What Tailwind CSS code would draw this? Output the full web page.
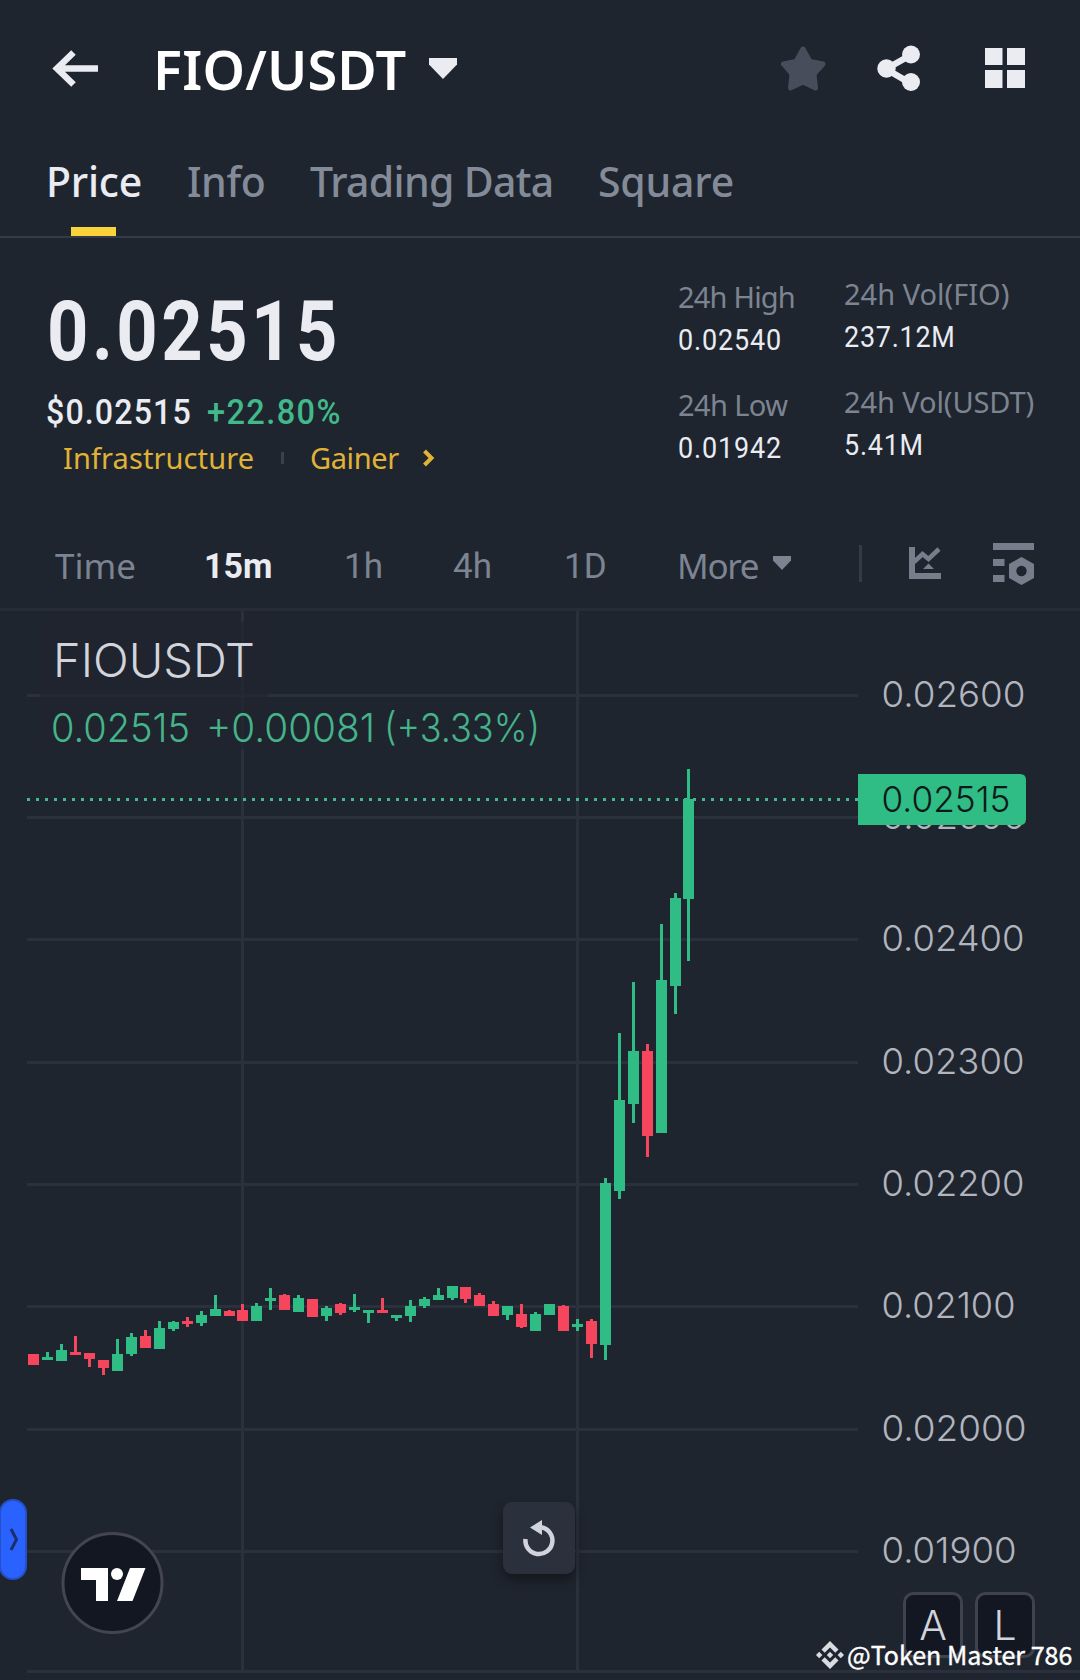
<!DOCTYPE html>
<html lang="en">
<head>
    <meta charset="UTF-8">
    <meta name="viewport" content="width=device-width, initial-scale=1.0">
    <title>FIO/USDT</title>
    <script src="https://cdn.jsdelivr.net/npm/@tailwindcss/browser@4"></script>
</head>
<body class="bg-[#1f252f] font-['Noto_Sans',sans-serif] text-[#eaecf2]">
    <div class="w-[1080px] h-[1680px] overflow-hidden flex flex-col">
        <!-- Header -->
        <header class="h-[137px] shrink-0 flex items-center pl-[52px] pr-[55px]">
            <svg class="w-[48px] h-[38px] shrink-0" viewBox="0 0 48 38" fill="none" stroke="#eaecf2" stroke-width="6.5"><path d="M5 18.500H46M21.500 2.500L5 18.500L21.500 34.500"/></svg>
            <h1 class="ml-[53px] w-[263px] whitespace-nowrap text-[54px] leading-[60px] font-semibold text-white tracking-[0.2px]">FIO/USDT</h1>
            <svg class="ml-[13px] w-[28px] h-[22px]" viewBox="0 0 28 22" fill="#eaecf2"><path d="M0 0H28V6.500L14 21L0 6.500Z"/></svg>
            <div class="ml-auto flex items-center">
                <svg class="w-[46px] h-[48px]" viewBox="0 0 46 48" fill="#474d5b" stroke="#474d5b" stroke-width="5" stroke-linejoin="round"><path d="M22 4L29 16.500L42 19L33 29L34.500 43L22 37L9.500 43L11 29L2.500 19L15 16.500Z"/></svg>
                <svg class="ml-[49px] w-[44px] h-[48px]" viewBox="0 0 44 48" fill="#eaecf2" stroke="#eaecf2"><path d="M34 10.500L10 24L34 38" fill="none" stroke-width="6.500"/><circle cx="35" cy="9.500" r="9" stroke="none"/><circle cx="10.500" cy="23.500" r="9.200" stroke="none"/><circle cx="35" cy="37" r="9" stroke="none"/></svg>
                <svg class="ml-[65px] w-[40px] h-[42px]" viewBox="0 0 40 42" fill="#eaecf2"><path d="M0 0H17.500V17H0ZM22 0H40V17H22ZM0 22H17.500V40H0ZM22 22H40V40H22Z"/></svg>
            </div>
        </header>

        <!-- Tabs -->
        <nav class="h-[101px] shrink-0 border-b-2 border-[#333b47] pl-[46px] pt-[19px] flex text-[41px] leading-[50px] font-medium text-[#848b98] whitespace-nowrap">
            <div class="relative w-[141px] text-[#eaecf2] tracking-[-0.2px]">Price<span class="absolute left-[25px] bottom-0 w-[45px] h-[9px] bg-[#f8d33a]"></span></div>
            <div class="w-[123px] tracking-[-0.4px]">Info</div>
            <div class="w-[288px] tracking-[-0.7px]">Trading Data</div>
            <div class="tracking-[-0.2px]">Square</div>
        </nav>

        <!-- Price summary -->
        <section class="h-[286px] shrink-0 flex whitespace-nowrap">
            <div class="w-[678px] pl-[47px] pt-[52px]">
                <div class="font-[Roboto] text-[83px] leading-[84px] font-bold origin-left scale-x-[0.87] tracking-[4px]">0.02515</div>
                <div class="mt-[15px] -ml-px flex font-[Roboto] text-[35px] leading-[48px] font-medium">
                    <span class="w-[161px] origin-left scale-x-[0.92] tracking-[1.2px]">$0.02515</span>
                    <span class="text-[#41b98a] origin-left scale-x-[0.93] tracking-[1.5px]">+22.80%</span>
                </div>
                <div class="mt-[3px] pl-[16px] flex items-center text-[29px] leading-[36px] text-[#e0b236]">
                    <span class="w-[218px] tracking-[0.1px]">Infrastructure</span>
                    <span class="w-[3px] h-3 bg-[#3a414e]"></span>
                    <span class="ml-[26px] w-[112px] tracking-[-0.4px]">Gainer</span>
                    <svg class="w-[14px] h-[18px]" viewBox="0 0 14 18" fill="none" stroke="#e0b236" stroke-width="4"><path d="M2.500 2L9.500 9L2.500 16"/></svg>
                </div>
            </div>
            <div class="w-[166px] pt-[38px] text-[29px] leading-[42px]">
                <div class="text-[#7d8491] tracking-[-0.8px]">24h High</div>
                <div class="pt-px font-[Roboto] origin-left scale-x-[0.93] tracking-[0.9px]">0.02540</div>
                <div class="mt-[23px] text-[#7d8491] tracking-[-0.6px]">24h Low</div>
                <div class="pt-px font-[Roboto] origin-left scale-x-[0.93] tracking-[0.9px]">0.01942</div>
            </div>
            <div class="pt-[35px] text-[29px] leading-[42px]">
                <div class="text-[#7d8491]">24h Vol(FIO)</div>
                <div class="pt-px font-[Roboto] origin-left scale-x-[0.93] tracking-[0.8px]">237.12M</div>
                <div class="mt-[23px] text-[#7d8491] tracking-[-0.1px]">24h Vol(USDT)</div>
                <div class="pt-px font-[Roboto] origin-left scale-x-[0.93] tracking-[0.8px]">5.41M</div>
            </div>
        </section>

        <!-- Intervals -->
        <div class="h-[84px] shrink-0 pl-[55px] flex items-center text-[35px] leading-[42px] text-[#7d8491] whitespace-nowrap">
            <span class="w-[149px]">Time</span>
            <span class="w-[140px] pt-px font-[Roboto] font-bold text-[#eaecf2] origin-left scale-x-[0.97]">15m</span>
            <span class="w-[109px] pt-0.5 font-[Roboto]">1h</span>
            <span class="w-[111px] pt-0.5 font-[Roboto]">4h</span>
            <span class="w-[113px] pt-0.5 font-[Roboto]">1D</span>
            <span class="w-[96px] tracking-[-1.3px]">More</span>
            <svg class="w-[18px] h-[24px]" viewBox="0 0 18 24" fill="#7d8491"><path d="M0 2H18V6.500L9 16L0 6.500Z"/></svg>
            <span class="ml-[68px] mb-1.5 w-[3px] h-[37px] bg-[#343b47]"></span>
            <svg class="ml-[47px] mb-1.5 w-[32px] h-[38px]" viewBox="0 0 32 38" fill="#777e8b"><path d="M0 3H6V29H32V35H0Z"/><path d="M5 18L13.500 10L19.500 15L30 5" fill="none" stroke="#777e8b" stroke-width="4.500"/><path d="M14 25L19.500 19.500L25 25Z"/></svg>
            <svg class="ml-[52px] mb-1.5 w-[41px] h-[46px]" viewBox="0 0 41 46" fill="#777e8b"><path d="M0 3H41V10H0ZM0 19H11.500V26H0ZM0 35H11.500V42H0Z"/><path fill-rule="evenodd" d="M28.500 17L41 24V38L28.500 45L16 38V24ZM28.500 25.800A5.200 5.200 0 1 0 28.500 36.200A5.200 5.200 0 1 0 28.500 25.800Z"/></svg>
        </div>

        <!-- Chart -->
        <div class="relative h-[1072px] shrink-0">
            <svg class="block w-[1080px] h-[1072px] font-[Inter,sans-serif]" viewBox="0 608 1080 1072">
                <g fill="#2a313c">
                    <rect x="0" y="608" width="1080" height="3" fill="#262d38"/>
                    <rect x="241" y="611" width="3" height="1060"/>
                    <rect x="576" y="611" width="3" height="1060"/>
                    <rect x="27" y="1670" width="1053" height="3"/>
                </g>
                <g id="grid" fill="#2a313c"></g>
                <rect x="40" y="622" width="228" height="128" fill="#1f252f" fill-opacity="0.6"/>
                <path d="M27 799.500H858" stroke="#41b98a" stroke-width="3" stroke-dasharray="3 6"/>
                <g id="candles"></g>

                <text x="53" y="677" font-size="47" font-weight="300" fill="#d1d4dc" textLength="202" lengthAdjust="spacingAndGlyphs">FIOUSDT</text>
                <g font-size="39" font-weight="300" fill="#45b48a">
                    <text x="51" y="742" textLength="139" lengthAdjust="spacingAndGlyphs">0.02515</text>
                    <text x="206" y="742" textLength="169" lengthAdjust="spacingAndGlyphs">+0.00081</text>
                    <text x="384" y="742" textLength="156" lengthAdjust="spacingAndGlyphs">(+3.33%)</text>
                </g>
                <g id="scale" font-size="36" font-weight="300" fill="#b2b5be"></g>
                <path d="M858 774H1020Q1026 774 1026 780V819Q1026 825 1020 825H858Z" fill="#2fbd85"/>
                <text x="881.500" y="812" font-size="36" font-weight="300" fill="#0d1a1c" textLength="129" lengthAdjust="spacingAndGlyphs">0.02515</text>

                <!-- side handle -->
                <rect x="0" y="1500" width="26" height="79" rx="13" fill="#2962ff" stroke="#2450c8" stroke-width="2"/>
                <path d="M11 1529L16.500 1539.500L11 1550" fill="none" stroke="#1c2f6b" stroke-width="3"/>

                <!-- TradingView badge -->
                <circle cx="112.500" cy="1583" r="49.500" fill="#131722" stroke="#434651" stroke-width="3"/>
                <g fill="#fff">
                    <path d="M81 1568H108V1601H96V1580H81Z"/>
                    <circle cx="117" cy="1574" r="6"/>
                    <path d="M130 1568H145.500L132.500 1601H117Z"/>
                </g>

                <!-- scale toggles -->
                <g fill="#131722" stroke="#3f434e" stroke-width="3">
                    <rect x="904.500" y="1593.500" width="57" height="63" rx="9"/>
                    <rect x="976.500" y="1593.500" width="57" height="63" rx="9"/>
                </g>
                <g font-size="41" font-weight="300" fill="#d1d4dc" text-anchor="middle">
                    <text x="933" y="1640">A</text>
                    <text x="1005" y="1640">L</text>
                </g>
            </svg>

            <!-- Reset button -->
            <button class="absolute left-[503px] top-[894px] w-[72px] h-[72px] rounded-[9px] bg-[#2a303c] shadow-[0_6px_12px_rgba(0,0,0,0.4)]">
                <svg class="w-[72px] h-[72px]" viewBox="0 0 72 72"><path d="M22.500 37A13.500 13.500 0 1 0 38 25.200" fill="none" stroke="#d1d4dc" stroke-width="4.500"/><path d="M27 25.500L39 18V33Z" fill="#d1d4dc"/></svg>
            </button>

            <!-- Watermark -->
            <div class="absolute left-[816px] top-[1029px] flex items-center text-white whitespace-nowrap">
                <svg class="w-[28px] h-[28px]" viewBox="0 0 28 28" fill="#d9dbe0"><path d="M14 0L22.500 8.500L19.300 11.700L14 6.400L8.700 11.700L5.500 8.500ZM14 28L22.500 19.500L19.300 16.300L14 21.600L8.700 16.300L5.500 19.500ZM14 10.800L17.200 14L14 17.200L10.800 14ZM3.200 10.800L6.400 14L3.200 17.200L0 14ZM24.800 10.800L28 14L24.800 17.200L21.600 14Z"/></svg>
                <span class="ml-[3px] mb-0.5 font-['Noto_Sans_CJK_SC',sans-serif] font-normal text-[25px] leading-[34px] [-webkit-text-stroke:0.4px_white]">@Token Master 786</span>
            </div>
        </div>
    </div>

    <script>
        const svgNS = 'http://www.w3.org/2000/svg';

        function add(parent, tag, attrs, text) {
            const el = document.createElementNS(svgNS, tag);
            for (const key in attrs) el.setAttribute(key, attrs[key]);
            if (text) el.textContent = text;
            document.getElementById(parent).appendChild(el);
        }

        // price, label width
        const prices = [
            ['0.02600', 144], ['0.02500', 144], ['0.02400', 143], ['0.02300', 143],
            ['0.02200', 143], ['0.02100', 134], ['0.02000', 145], ['0.01900', 135]
        ];
        prices.forEach(([label, width], i) => {
            const y = 695.2 + i * 122.3;
            add('grid', 'rect', { x: 27, y: Math.round(y - 1.5), width: 831, height: 3 });
            add('scale', 'text', { x: 881.5, y: Math.round(y + 11.6), textLength: width, lengthAdjust: 'spacingAndGlyphs' }, label);
        });

        // up, high, body top, body bottom, low
        const candles = [
            [0, 1354, 1354, 1365, 1365], [1, 1352, 1357, 1360, 1360], [1, 1344, 1350, 1361, 1361], [0, 1336, 1352, 1355, 1355],
            [0, 1353, 1353, 1359, 1367], [0, 1360, 1360, 1368, 1375], [1, 1339, 1354, 1371, 1371], [1, 1333, 1337, 1354, 1356],
            [0, 1330, 1336, 1348, 1348], [1, 1321, 1328, 1349, 1349], [1, 1321, 1322, 1329, 1331], [0, 1317, 1321, 1324, 1327],
            [1, 1311, 1315, 1323, 1326], [1, 1295, 1309, 1316, 1316], [0, 1310, 1311, 1316, 1316], [0, 1304, 1310, 1321, 1321],
            [1, 1303, 1306, 1321, 1321], [1, 1288, 1298, 1301, 1310], [0, 1294, 1295, 1310, 1310], [1, 1295, 1298, 1312, 1312],
            [0, 1299, 1299, 1317, 1317], [1, 1306, 1308, 1316, 1321], [0, 1303, 1304, 1313, 1315], [1, 1294, 1307, 1310, 1312],
            [1, 1310, 1310, 1313, 1323], [0, 1298, 1310, 1313, 1313], [1, 1315, 1315, 1318, 1321], [1, 1300, 1306, 1316, 1322],
            [1, 1297, 1299, 1306, 1308], [1, 1288, 1295, 1300, 1300], [1, 1286, 1286, 1298, 1300], [0, 1287, 1287, 1299, 1303],
            [0, 1293, 1295, 1306, 1306], [0, 1301, 1304, 1316, 1316], [1, 1306, 1306, 1315, 1320], [0, 1304, 1314, 1327, 1328],
            [1, 1312, 1314, 1331, 1331], [1, 1304, 1304, 1315, 1315], [0, 1305, 1306, 1331, 1331], [1, 1319, 1324, 1327, 1331],
            [0, 1319, 1321, 1344, 1358], [1, 1178, 1183, 1345, 1360], [1, 1033, 1100, 1191, 1199], [1, 982, 1051, 1104, 1123],
            [0, 1044, 1051, 1136, 1157], [1, 924, 980, 1133, 1133], [1, 893, 898, 986, 1014], [1, 769, 799, 899, 961]
        ];
        candles.forEach(([up, high, top, bottom, low], i) => {
            const x = 28 + i * 14 - Math.floor((i + 1) / 16);
            const fill = up ? '#2fbd85' : '#f6465d';
            add('candles', 'rect', { x: x + 4, y: high, width: 3, height: low - high, fill });
            add('candles', 'rect', { x, y: top, width: 11, height: bottom - top, fill });
        });
    </script>
</body>
</html>
